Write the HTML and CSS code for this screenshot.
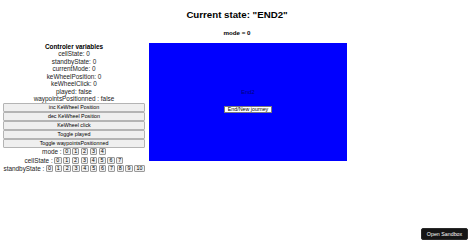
FILE: index.html
```html
<!DOCTYPE html>
<html lang="en">
<head>
<meta charset="utf-8">
<title>State machine</title>
<link rel="stylesheet" href="styles.css">
</head>
<body>
<div class="page">
  <h2 class="title">Current state: "END2"</h2>
  <h4 class="mode-title">mode = 0</h4>
  <div class="main">
    <div class="controls">
      <div class="heading">Controler variables</div>
      <div>cellState: 0</div>
      <div>standbyState: 0</div>
      <div>currentMode: 0</div>
      <div>keWheelPosition: 0</div>
      <div>keWheelClick: 0</div>
      <div>played: false</div>
      <div>waypointsPositionned : false</div>
      <button class="wide">inc KeWheel Position</button>
      <button class="wide">dec KeWheel Position</button>
      <button class="wide">KeWheel click</button>
      <button class="wide">Toggle played</button>
      <button class="wide">Toggle waypointsPositionned</button>
      <div class="numrow"><span class="numlabel">mode :</span><button class="num">0</button><button class="num">1</button><button class="num">2</button><button class="num">3</button><button class="num">4</button></div>
      <div class="numrow"><span class="numlabel">cellState :</span><button class="num">0</button><button class="num">1</button><button class="num">2</button><button class="num">3</button><button class="num">4</button><button class="num">5</button><button class="num">6</button><button class="num">7</button></div>
      <div class="numrow"><span class="numlabel">standbyState :</span><button class="num">0</button><button class="num">1</button><button class="num">2</button><button class="num">3</button><button class="num">4</button><button class="num">5</button><button class="num">6</button><button class="num">7</button><button class="num">8</button><button class="num">9</button><button class="num">10</button></div>
    </div>
    <div class="screen">
      <div class="screen-label">End2</div>
      <button class="journey">End/New journey</button>
    </div>
  </div>
</div>
<button class="sandbox">Open Sandbox</button>
</body>
</html>
```
FILE: styles.css
```css
html, body {
  margin: 0;
  padding: 0;
  background: #ffffff;
}
body {
  font-family: "Liberation Sans", Arial, sans-serif;
  color: #000;
}
.page {
  padding: 9px 3px 0;
}
.title {
  margin: 0;
  font-size: 9.7px;
  line-height: 11px;
  font-weight: bold;
  text-align: center;
}
.mode-title {
  margin: 8.5px 0 0;
  font-size: 6.2px;
  line-height: 7px;
  font-weight: bold;
  text-align: center;
}
.main {
  display: flex;
  align-items: flex-start;
  gap: 4px;
  margin-top: 7.5px;
}
.controls {
  width: 142px;
  flex-shrink: 0;
  font-size: 6.4px;
  line-height: 7.43px;
  text-align: center;
  color: #222;
}
.heading {
  font-weight: bold;
  color: #000;
}
button {
  font-family: "Liberation Sans", Arial, sans-serif;
  color: #000;
}
.wide {
  display: block;
  width: 100%;
  height: 8.5px;
  margin: 0.5px 0 0;
  padding: 0;
  font-size: 5.33px;
  line-height: 6px;
  background: #efefef;
  border: 1px solid #b4b4b4;
  border-radius: 1px;
}
.numrow {
  display: flex;
  justify-content: center;
  align-items: center;
  gap: 1.5px;
  height: 8.5px;
  white-space: nowrap;
}
.numlabel {
  flex-shrink: 0;
  white-space: nowrap;
}
.num {
  flex-shrink: 0;
  height: 7px;
  padding: 0 1.2px;
  font-size: 5.33px;
  line-height: 5px;
  background: #efefef;
  border: 1px solid #9a9a9a;
  border-radius: 1px;
}
.screen {
  width: 198px;
  height: 118px;
  flex-shrink: 0;
  background: #0000ff;
  display: flex;
  flex-direction: column;
  align-items: center;
  justify-content: center;
  padding-bottom: 2px;
  box-sizing: border-box;
}
.screen-label {
  font-size: 5.8px;
  line-height: 6.1px;
  color: #000080;
  margin-bottom: 11.7px;
}
.journey {
  height: 7px;
  padding: 0 2.5px;
  font-size: 5.33px;
  line-height: 5px;
  background: #ffffff;
  border: 1px solid #7a7a7a;
  border-radius: 0;
}
.sandbox {
  position: fixed;
  right: 6px;
  bottom: 8px;
  width: 47px;
  height: 12px;
  padding: 0;
  font-size: 5.3px;
  color: #ffffff;
  background: #151515;
  border: 1px solid #2a2a2a;
  border-radius: 2px;
}
```
